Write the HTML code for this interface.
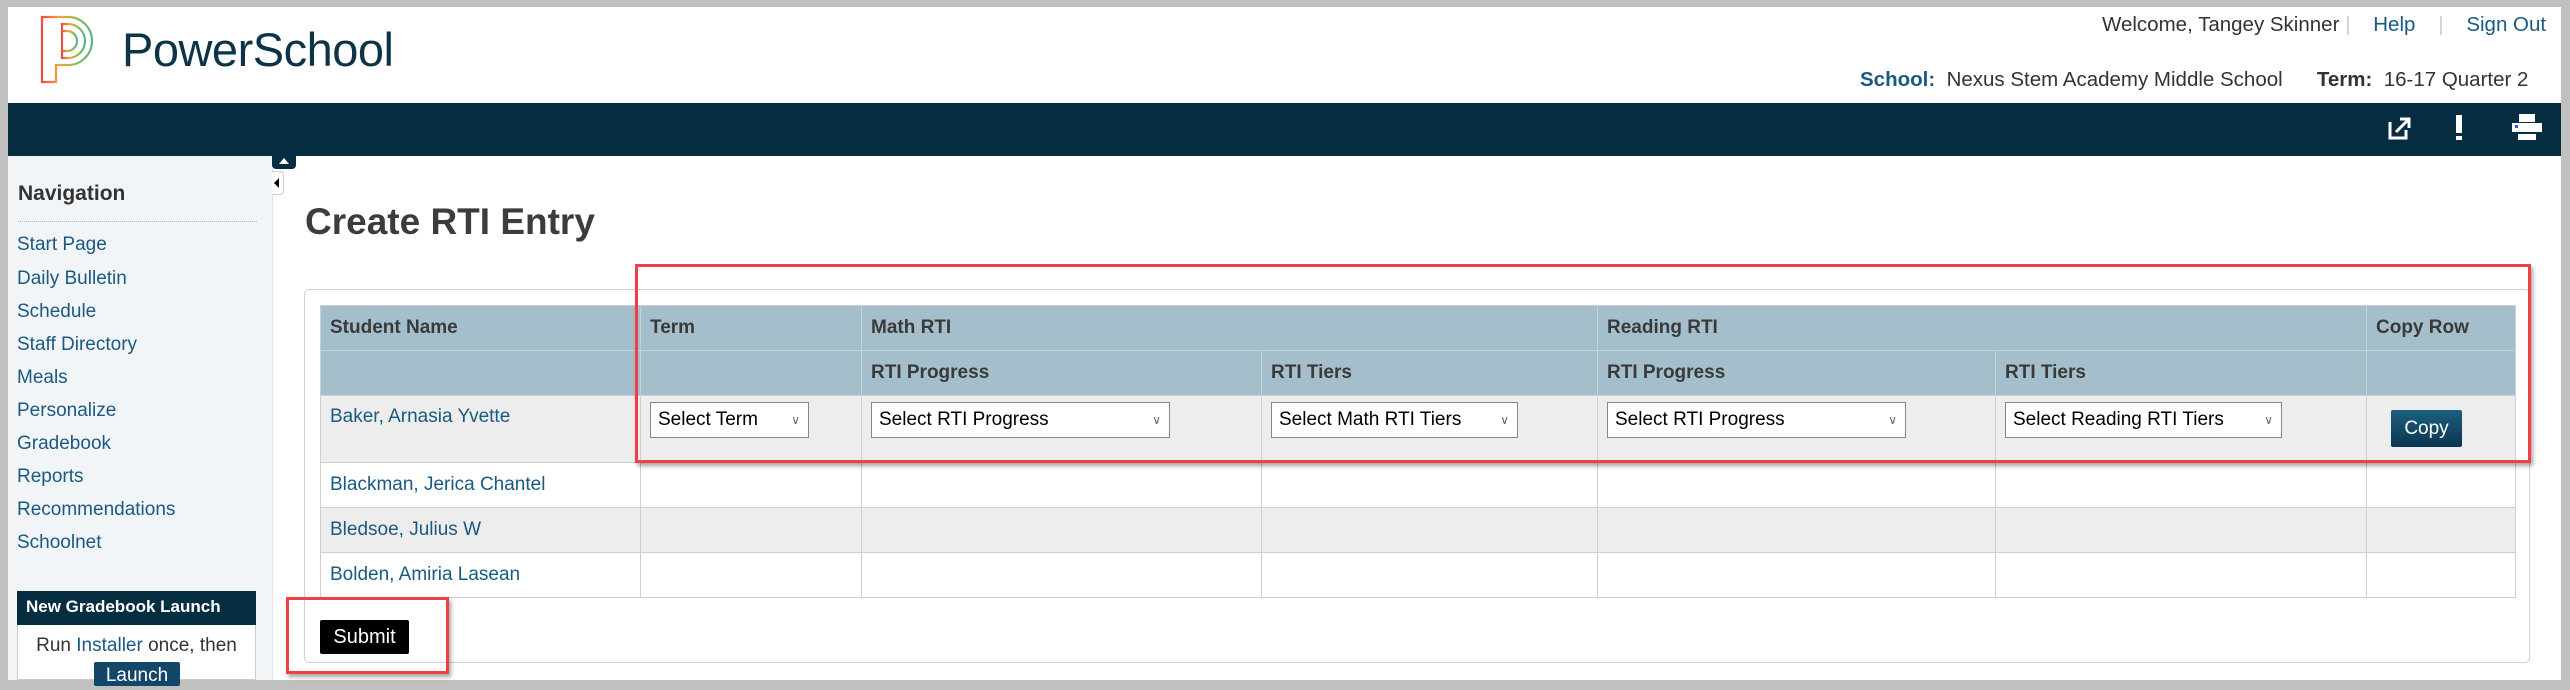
<!DOCTYPE html>
<html><head><meta charset="utf-8">
<style>
*{margin:0;padding:0;box-sizing:border-box}
body{width:2570px;height:690px;background:#c0c0c0;position:relative;overflow:hidden;font-family:"Liberation Sans",Arial,sans-serif}
.a{position:absolute}
#page{left:8px;top:7px;width:2553px;height:673px;background:#fff}
#nav{left:8px;top:103px;width:2553px;height:53px;background:#072d41}
.lnk{color:#1a5a80}
#side{left:8px;top:156px;width:265px;height:524px;background:#f2f5f8;border-right:1px solid #dde3e8}
.sl{position:absolute;left:17px;font-size:19px;color:#1a5a80;line-height:22px}
table{border-collapse:collapse;position:absolute;left:320px;top:305px;table-layout:fixed}
td{border:1px solid #cfcfcf;font-size:19px;padding:0 9px;color:#1a5a80}
tr.h td{background:#a4bfcb;color:#3a3a3a;font-weight:bold;font-size:19px;border-color:#c5d2d8}
tr.g td{background:#ededed}
.sel{display:inline-block;height:36px;border:1px solid #888;background:#fff;color:#000;font-size:19px;line-height:34px;padding-left:7px;position:relative}
.sel:after{content:"\2228";position:absolute;right:8px;top:0;font-size:12px;color:#666}
.red{position:absolute;border:3px solid #f04046;box-shadow:2px 3px 4px rgba(0,0,0,.35)}
</style></head><body>
<div class="a" id="page"></div>
<svg class="a" style="left:38px;top:14px" width="60" height="72" viewBox="38 14 60 72">
<defs><linearGradient id="lg" x1="0" x2="1" y1="0" y2="0"><stop offset="0" stop-color="#e8504a"/><stop offset=".35" stop-color="#f6a23a"/><stop offset=".6" stop-color="#a9b845"/><stop offset="1" stop-color="#5bb58c"/></linearGradient></defs>
<g fill="none" stroke="url(#lg)" stroke-width="2.2">
<path d="M42,17 H68 A24,24 0 0 1 68,65 H56 V82 H42 Z"/>
<path d="M56,17 V65"/>
<path d="M62,24 H68 A17,17 0 0 1 68,58 H62 Z"/>
<path d="M62,31 H67 A10,10 0 0 1 67,51 H62"/>
</g></svg>
<div class="a" style="left:122px;top:22px;font-size:47px;color:#0d3446;letter-spacing:-0.5px">PowerSchool</div>
<div class="a" style="left:2102px;top:13px;font-size:20.5px;color:#333;white-space:nowrap">Welcome, Tangey Skinner<span style="color:#ccc"> |</span>&nbsp;&nbsp;&nbsp;&nbsp;<span class="lnk">Help</span>&nbsp;&nbsp;&nbsp;&nbsp;<span style="color:#ccc">|</span>&nbsp;&nbsp;&nbsp;&nbsp;<span class="lnk">Sign Out</span></div>
<div class="a" style="left:1860px;top:68px;font-size:20.5px;color:#333;white-space:nowrap"><b class="lnk">School:</b>&nbsp; Nexus Stem Academy Middle School&nbsp;&nbsp;&nbsp;&nbsp;&nbsp; <b>Term:</b>&nbsp; 16-17 Quarter 2</div>
<div class="a" id="nav"></div>
<svg class="a" style="left:2388px;top:116px" width="24" height="24" viewBox="0 0 24 24"><path d="M2,6 V22 H18 V14" fill="none" stroke="#fff" stroke-width="3"/><path d="M8,16 L20,4 M12,3 H21 V12" fill="none" stroke="#fff" stroke-width="3"/></svg>
<div class="a" style="left:2456px;top:115px;width:6px;height:18px;background:#fff"></div>
<div class="a" style="left:2456px;top:136px;width:6px;height:4px;background:#fff"></div>
<svg class="a" style="left:2512px;top:114px" width="30" height="26" viewBox="0 0 30 26"><rect x="7" y="0" width="16" height="8" fill="#fff"/><rect x="0" y="9" width="30" height="9" fill="#fff"/><rect x="3" y="11" width="3" height="3" fill="#3050ff"/><rect x="6" y="20" width="18" height="6" fill="#fff"/></svg>
<div class="a" id="side"></div>
<div class="a" style="left:272px;top:156px;width:24px;height:13px;background:#072d41;border-radius:0 0 4px 4px"></div>
<div class="a" style="left:279px;top:158px;width:0;height:0;border-left:5px solid transparent;border-right:5px solid transparent;border-bottom:6px solid #fff"></div>
<div class="a" style="left:272px;top:171px;width:12px;height:24px;background:#fff;border:1px solid #ccc;border-left:none;border-radius:0 4px 4px 0"></div>
<div class="a" style="left:274px;top:178px;width:0;height:0;border-top:5px solid transparent;border-bottom:5px solid transparent;border-right:5px solid #000"></div>
<div class="a" style="left:18px;top:182px;font-size:21px;font-weight:bold;color:#333">Navigation</div>
<div class="a" style="left:18px;top:221px;width:239px;border-top:1px dotted #bbb"></div>
<div class="sl" style="top:234px">Start Page</div>
<div class="sl" style="top:268px">Daily Bulletin</div>
<div class="sl" style="top:301px">Schedule</div>
<div class="sl" style="top:334px">Staff Directory</div>
<div class="sl" style="top:367px">Meals</div>
<div class="sl" style="top:400px">Personalize</div>
<div class="sl" style="top:433px">Gradebook</div>
<div class="sl" style="top:466px">Reports</div>
<div class="sl" style="top:499px">Recommendations</div>
<div class="sl" style="top:532px">Schoolnet</div>
<div class="a" style="left:17px;top:591px;width:239px;height:89px;border:1px solid #ccc;background:#fff"></div>
<div class="a" style="left:17px;top:591px;width:239px;height:34px;background:#072d41;color:#fff;font-weight:bold;font-size:17px;padding:6px 0 0 9px">New Gradebook Launch</div>
<div class="a" style="left:17px;top:635px;width:239px;text-align:center;font-size:19px;color:#333">Run <span class="lnk">Installer</span> once, then</div>
<div class="a" style="left:94px;top:662px;width:86px;height:24px;background:#13476a;color:#fff;font-size:19px;text-align:center;padding-top:3px;border-radius:2px">Launch</div>
<div class="a" style="left:305px;top:201px;font-size:37px;font-weight:bold;color:#3c3c3c">Create RTI Entry</div>
<div class="a" style="left:304px;top:289px;width:2226px;height:374px;border:1px solid #d0d0d0;border-radius:5px"></div>
<table>
<colgroup><col style="width:320px"><col style="width:221px"><col style="width:400px"><col style="width:336px"><col style="width:398px"><col style="width:371px"><col style="width:149px"></colgroup>
<tr class="h" style="height:45px"><td>Student Name</td><td>Term</td><td colspan="2">Math RTI</td><td colspan="2">Reading RTI</td><td>Copy Row</td></tr>
<tr class="h" style="height:45px"><td></td><td></td><td>RTI Progress</td><td>RTI Tiers</td><td>RTI Progress</td><td>RTI Tiers</td><td></td></tr>
<tr class="g" style="height:67px"><td style="vertical-align:top;padding-top:10px">Baker, Arnasia Yvette</td>
<td style="vertical-align:top;padding-top:6px"><span class="sel" style="width:159px">Select Term</span></td>
<td style="vertical-align:top;padding-top:6px"><span class="sel" style="width:299px">Select RTI Progress</span></td>
<td style="vertical-align:top;padding-top:6px"><span class="sel" style="width:247px">Select Math RTI Tiers</span></td>
<td style="vertical-align:top;padding-top:6px"><span class="sel" style="width:299px">Select RTI Progress</span></td>
<td style="vertical-align:top;padding-top:6px"><span class="sel" style="width:277px">Select Reading RTI Tiers</span></td>
<td style="vertical-align:top;padding:14px 0 0 24px"><span style="display:inline-block;width:71px;height:37px;background:linear-gradient(#1d5f80,#0b3550);color:#fff;font-size:19px;text-align:center;line-height:37px;border-radius:2px">Copy</span></td></tr>
<tr style="height:45px"><td>Blackman, Jerica Chantel</td><td></td><td></td><td></td><td></td><td></td><td></td></tr>
<tr class="g" style="height:45px"><td>Bledsoe, Julius W</td><td></td><td></td><td></td><td></td><td></td><td></td></tr>
<tr style="height:45px"><td>Bolden, Amiria Lasean</td><td></td><td></td><td></td><td></td><td></td><td></td></tr>
</table>
<div class="a" style="left:320px;top:620px;width:89px;height:34px;background:#000;color:#fff;font-size:20px;text-align:center;line-height:34px;border-radius:2px">Submit</div>
<div class="red" style="left:635px;top:264px;width:1896px;height:199px"></div>
<div class="red" style="left:286px;top:597px;width:163px;height:77px"></div>
</body></html>
